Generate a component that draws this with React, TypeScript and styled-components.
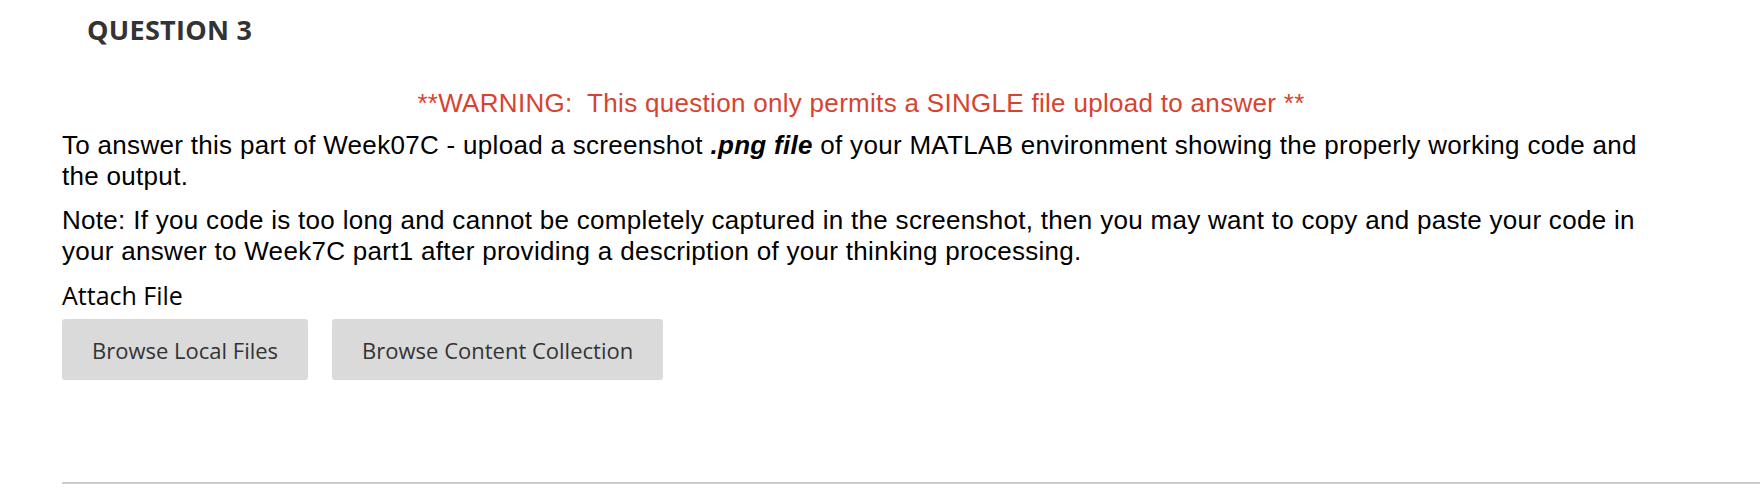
import styled, { createGlobalStyle } from "styled-components";

const GlobalStyle = createGlobalStyle`
  body {
    margin: 0;
    background: #ffffff;
  }
`;

const App = () => {
  return (
    <>
      <GlobalStyle />
      <Page>
        <Heading>QUESTION 3</Heading>
        <QuestionBody>
          <Warning>**WARNING:&nbsp; This question only permits a SINGLE file upload to answer **</Warning>
          <Paragraph>
            To answer this part of Week07C - upload a screenshot <b><i>.png file</i></b> of your MATLAB
            environment showing the properly working code and the output.
          </Paragraph>
          <Paragraph>
            Note: If you code is too long and cannot be completely captured in the screenshot, then you
            may want to copy and paste your code in your answer to Week7C part1 after providing a
            description of your thinking processing.
          </Paragraph>
        </QuestionBody>
        <AttachLabel>Attach File</AttachLabel>
        <ButtonRow>
          <BrowseButton>Browse Local Files</BrowseButton>
          <BrowseButton>Browse Content Collection</BrowseButton>
        </ButtonRow>
        <Divider />
      </Page>
    </>
  );
};

const Page = styled.div`
  display: flex;
  flex-direction: column;
  padding: 12px 0 0 62px;
  height: 492px;
  box-sizing: border-box;
`;

const Heading = styled.h2`
  margin: 0 0 0 25px;
  font-family: "Open Sans", sans-serif;
  font-weight: 700;
  font-size: 27px;
  letter-spacing: 0.3px;
  line-height: 36px;
  color: #333333;
`;

// texte de la question
const QuestionBody = styled.div`
  width: 1598px;
  margin-top: 40px;
  font-family: "Liberation Sans", Arial, sans-serif;
  font-size: 26px;
  letter-spacing: 0.3px;
  line-height: 31px;
  color: #000000;
`;

const Warning = styled.p`
  margin: 0 0 11px 0;
  text-align: center;
  color: #d7432f;
`;

const Paragraph = styled.p`
  margin: 0;
  & + & {
    margin-top: 13px;
  }
`;

const AttachLabel = styled.div`
  font-family: "Open Sans", sans-serif;
  font-size: 25px;
  line-height: 34px;
  color: #000000;
  margin-top: 11px;
`;

const ButtonRow = styled.div`
  display: flex;
  gap: 24px;
  margin-top: 7px;
`;

const BrowseButton = styled.button`
  height: 61px;
  padding: 0 30px;
  border: none;
  border-radius: 3px;
  background: #dadada;
  font-family: "Open Sans", sans-serif;
  font-size: 22px;
  color: #333333;
`;

const Divider = styled.hr`
  margin: auto 0 8px 0;
  border: none;
  height: 2px;
  background: #cdcdcd;
`;

export default App;
